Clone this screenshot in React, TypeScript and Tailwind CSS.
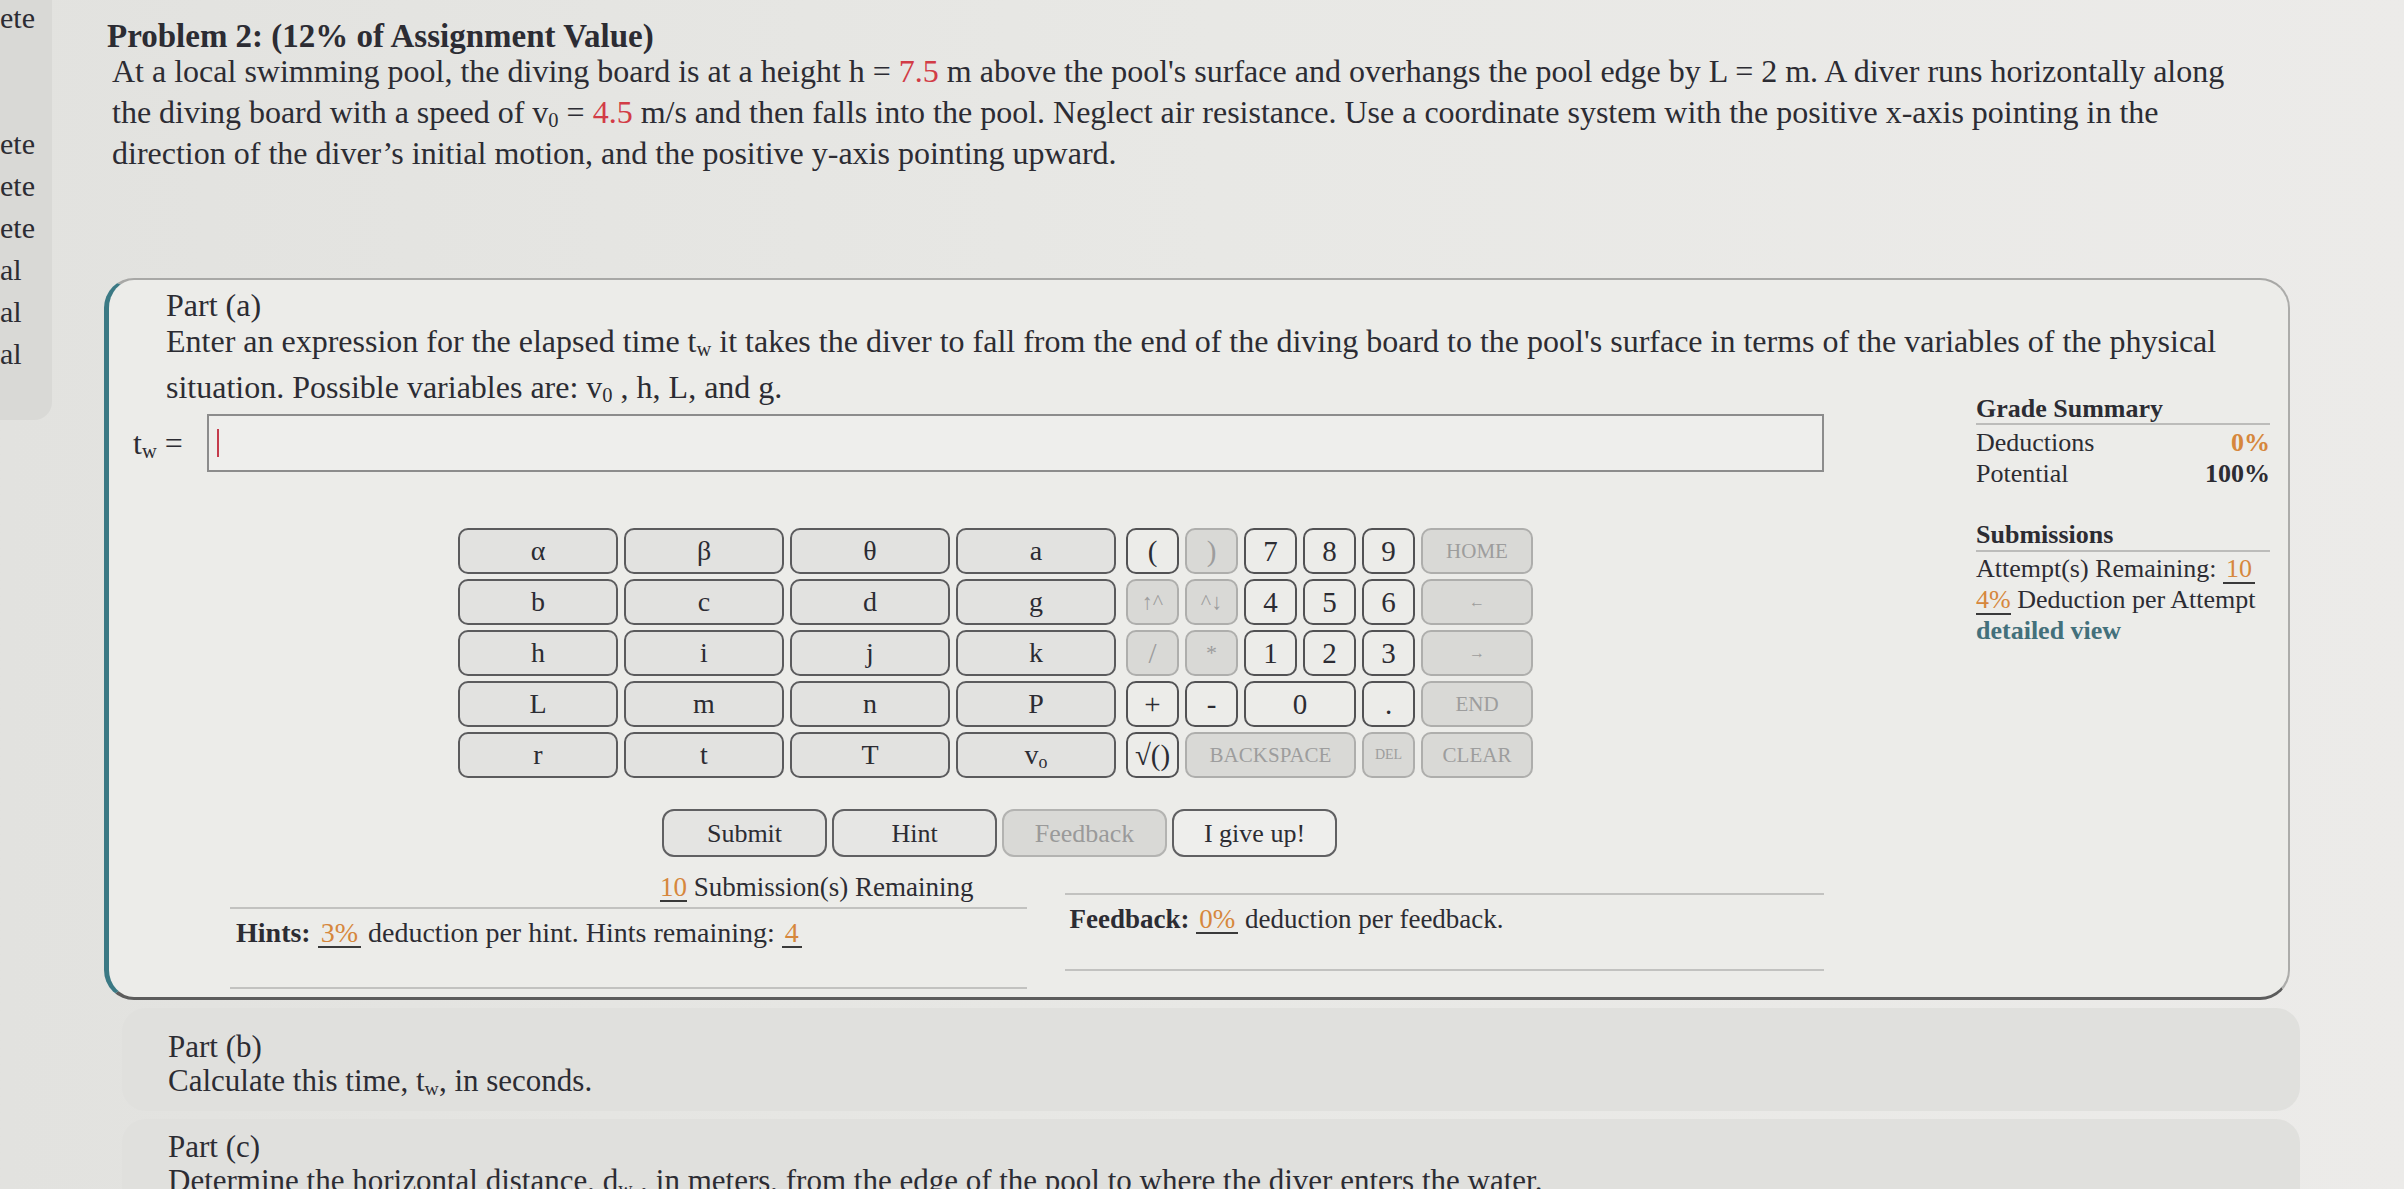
import React from 'react';

const serif = "font-['Liberation_Serif','Times_New_Roman',serif]";

const letterKeys = ['α', 'β', 'θ', 'a', 'b', 'c', 'd', 'g', 'h', 'i', 'j', 'k', 'L', 'm', 'n', 'P', 'r', 't', 'T', 'vo'];

type PadKey = { label: React.ReactNode; on?: boolean; span?: string; size?: string };

const padKeys: PadKey[] = [
    { label: '(', on: true },
    { label: ')' },
    { label: '7', on: true },
    { label: '8', on: true },
    { label: '9', on: true },
    { label: 'HOME', span: 'col-span-2', size: 'text-[21px]' },
    { label: '↑^', size: 'text-[22px]' },
    { label: '^↓', size: 'text-[22px]' },
    { label: '4', on: true },
    { label: '5', on: true },
    { label: '6', on: true },
    { label: '←', span: 'col-span-2', size: 'text-[16px]' },
    { label: '/' },
    { label: '*', size: 'text-[22px]' },
    { label: '1', on: true },
    { label: '2', on: true },
    { label: '3', on: true },
    { label: '→', span: 'col-span-2', size: 'text-[16px]' },
    { label: '+', on: true },
    { label: '-', on: true },
    { label: '0', on: true, span: 'col-span-2' },
    { label: '.', on: true },
    { label: 'END', span: 'col-span-2', size: 'text-[21px]' },
    { label: '√()', on: true },
    { label: 'BACKSPACE', span: 'col-span-3', size: 'text-[21px]' },
    { label: 'DEL', size: 'text-[14px]' },
    { label: 'CLEAR', span: 'col-span-2', size: 'text-[21px]' },
];

function Sub({ children }: { children: React.ReactNode }) {
    return <span className="text-[0.64em] relative top-[0.2em] leading-none">{children}</span>;
}

function Mark({ children }: { children: React.ReactNode }) {
    return (
        <span className="inline-block px-[3px] leading-[26px] text-[#d6873c] border-b-2 border-[#3a3a3a]">
            {children}
        </span>
    );
}

function SideBar() {
    const rows = ['ete', '', '', 'ete', 'ete', 'ete', 'al', 'al', 'al'];
    return (
        <div className="w-[52px] h-[420px] shrink-0 bg-[#d9d9d6] rounded-br-[18px] overflow-hidden">
            <div className="-mt-[3px]">
                {rows.map((t, i) => (
                    <div key={i} className="h-[42px] leading-[42px] text-[30px] whitespace-nowrap">
                        {t}
                    </div>
                ))}
            </div>
        </div>
    );
}

function Keypad() {
    return (
        <div className="flex gap-[10px] ml-[325px] mt-[56px]">
            <div className="grid grid-cols-[repeat(4,160px)] auto-rows-[46px] gap-x-[6px] gap-y-[5px]">
                {letterKeys.map((k) => (
                    <div
                        key={k}
                        className="flex items-center justify-center rounded-[10px] border-2 border-[#5b5b5d] bg-[#e2e2e0] text-[28px] leading-none"
                    >
                        {k === 'vo' ? (
                            <span>
                                v<Sub>o</Sub>
                            </span>
                        ) : (
                            k
                        )}
                    </div>
                ))}
            </div>
            <div className="grid grid-cols-[repeat(7,53px)] auto-rows-[46px] gap-x-[6px] gap-y-[5px]">
                {padKeys.map((k, i) => (
                    <div
                        key={i}
                        className={`flex items-center justify-center rounded-[10px] border-2 leading-none whitespace-nowrap ${k.span ?? ''} ${k.size ?? 'text-[29px]'} ${
                            k.on
                                ? 'border-[#525254] bg-[#ecece9] text-[#2c2c33]'
                                : 'border-[#aeaeac] bg-[#d9d9d6] text-[#9d9d9d]'
                        }`}
                    >
                        {k.label}
                    </div>
                ))}
            </div>
        </div>
    );
}

function ActionButtons() {
    const items = [
        { t: 'Submit', cls: 'border-[#606062] bg-[#e4e4e2] text-[#2c2c33]' },
        { t: 'Hint', cls: 'border-[#606062] bg-[#e6e6e4] text-[#2c2c33]' },
        { t: 'Feedback', cls: 'border-[#b3b3b1] bg-[#d9d9d6] text-[#9a9a9a]' },
        { t: 'I give up!', cls: 'border-[#606062] bg-[#eeeeec] text-[#2c2c33]' },
    ];
    return (
        <div className="flex gap-[5px] ml-[529px] mt-[31px]">
            {items.map((b) => (
                <div
                    key={b.t}
                    className={`w-[165px] h-[48px] rounded-[12px] border-2 flex items-center justify-center text-[26px] ${b.cls}`}
                >
                    {b.t}
                </div>
            ))}
        </div>
    );
}

function GradeSummary() {
    return (
        <div className="w-[294px] ml-[152px] -mt-[15px] text-[26px] shrink-0">
            <div className="font-bold leading-[28px] border-b-2 border-[#bcbcba]">Grade Summary</div>
            <div className="flex justify-between leading-[31px] mt-[2px]">
                <span>Deductions</span>
                <span className="font-bold text-[#d6873c]">0%</span>
            </div>
            <div className="flex justify-between leading-[31px]">
                <span>Potential</span>
                <span className="font-bold">100%</span>
            </div>
            <div className="font-bold leading-[30px] mt-[31px] border-b-2 border-[#bcbcba]">Submissions</div>
            <div className="leading-[31px] mt-[1px] whitespace-nowrap">
                Attempt(s) Remaining: <Mark>10</Mark>
            </div>
            <div className="leading-[31px] whitespace-nowrap">
                <span className="inline-block leading-[26px] text-[#d6873c] border-b-2 border-[#3a3a3a]">4%</span>{' '}
                Deduction per Attempt
            </div>
            <div className="leading-[31px] font-bold text-[#43707b]">detailed view</div>
        </div>
    );
}

function PartA() {
    return (
        <div className="rounded-[30px] border-l-[5px] border-l-[#3b7984] border-t-2 border-t-[#a8a8a6] border-r-2 border-r-[#acacaa] border-b-[3px] border-b-[#5c5c5c] bg-[#ecece9] pb-[8px]">
            <div className="pl-[57px] pt-[7px]">
                <div className="text-[32px] leading-[36px]">Part (a)</div>
                <div className="text-[32px] leading-[46px] -mt-[5px] whitespace-nowrap">
                    Enter an expression for the elapsed time t<Sub>w</Sub> it takes the diver to fall from the end of the
                    diving board to the pool's surface in terms of the variables of the physical
                    <br />
                    situation. Possible variables are: v<Sub>0</Sub> , h, L, and g.
                </div>
            </div>
            <div className="flex pl-[24px]">
                <div className="w-[1691px] shrink-0">
                    <div className="flex items-center mt-[4px]">
                        <div className="w-[74px] text-[32px] leading-none whitespace-nowrap">
                            t<Sub>w</Sub> =
                        </div>
                        <div className="flex-1 h-[58px] border-2 border-[#8c8c8c] bg-[#eeeeec] flex items-center">
                            <span className="ml-[8px] w-[2px] h-[28px] bg-[#c43b4c]" />
                        </div>
                    </div>
                    <Keypad />
                    <ActionButtons />
                    <div className="ml-[527px] mt-[14px] text-[27px] leading-[32px]">
                        <span className="inline-block leading-[26px] text-[#d6873c] border-b-2 border-[#3a3a3a]">10</span>{' '}
                        Submission(s) Remaining
                    </div>
                    <div className="flex items-start">
                        <div className="ml-[97px] mt-[4px] w-[841px] h-[82px] border-t-2 border-b-2 border-[#c2c2c0] pt-[8px] pl-[6px] text-[28px] leading-[32px] whitespace-nowrap">
                            <span className="font-bold">Hints:</span> <Mark>3%</Mark> deduction per hint. Hints remaining:{' '}
                            <Mark>4</Mark>
                        </div>
                        <div className="ml-[38px] -mt-[10px] w-[800px] h-[78px] border-t-2 border-b-2 border-[#c2c2c0] pt-[8px] pl-[4px] text-[27px] leading-[32px] whitespace-nowrap">
                            <span className="font-bold">Feedback:</span> <Mark>0%</Mark> deduction per feedback.
                        </div>
                    </div>
                </div>
                <GradeSummary />
            </div>
        </div>
    );
}

function OtherPart({ title, children, extra }: { title: string; children: React.ReactNode; extra: string }) {
    return (
        <div className={`ml-[18px] -mr-[10px] rounded-[24px] bg-[#e0e0dd] pl-[46px] text-[31px] ${extra}`}>
            <div className="leading-[32px]">{title}</div>
            <div className="leading-[36px] whitespace-nowrap">{children}</div>
        </div>
    );
}

export default function App() {
    return (
        <div
            className={`flex w-full h-[1189px] overflow-hidden bg-linear-to-r from-[#e2e2df] via-[#e8e8e5] to-[#ecebe9] text-[#2c2c33] ${serif}`}
        >
            <SideBar />
            <div className="flex-1 min-w-0 pl-[52px] pr-[114px]">
                <div className="pl-[3px] pt-[16px] text-[33px] leading-[40px] font-bold">
                    Problem 2: (12% of Assignment Value)
                </div>
                <div className="pl-[8px] -mt-[5px] text-[32px] leading-[41px] whitespace-nowrap">
                    At a local swimming pool, the diving board is at a height h = <span className="text-[#d23c46]">7.5</span> m
                    above the pool's surface and overhangs the pool edge by L = 2 m. A diver runs horizontally along
                    <br />
                    the diving board with a speed of v<Sub>0</Sub> = <span className="text-[#d23c46]">4.5</span> m/s and then
                    falls into the pool. Neglect air resistance. Use a coordinate system with the positive x-axis pointing in the
                    <br />
                    direction of the diver’s initial motion, and the positive y-axis pointing upward.
                </div>
                <div className="mt-[104px]">
                    <PartA />
                </div>
                <OtherPart title="Part (b)" extra="mt-[8px] pt-[23px] pb-[12px]">
                    Calculate this time, t<Sub>w</Sub>, in seconds.
                </OtherPart>
                <OtherPart title="Part (c)" extra="mt-[8px] pt-[12px] pb-[20px]">
                    Determine the horizontal distance, d<Sub>w</Sub> , in meters, from the edge of the pool to where the diver
                    enters the water.
                </OtherPart>
            </div>
        </div>
    );
}
